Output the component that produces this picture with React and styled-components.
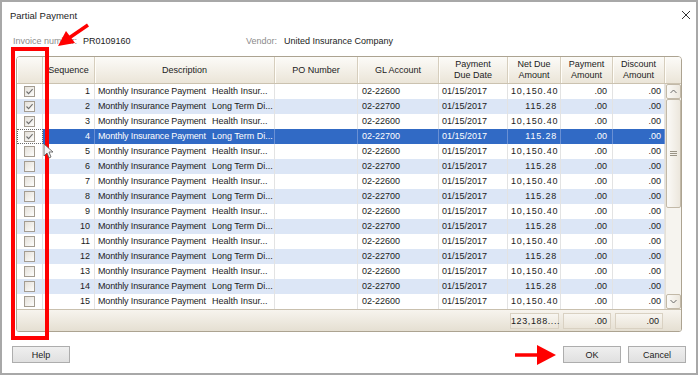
import React from 'react'
import styled, { createGlobalStyle } from 'styled-components'

const FONT = '"Liberation Sans", Arial, sans-serif'
const COLS = '26px 52px 180px 83px 81px 69px 53px 52px 52px'

const GlobalStyle = createGlobalStyle`
  html, body {
    margin: 0;
    padding: 0;
    background: #fff;
  }
  body {
    font-family: ${FONT};
    font-size: 9px;
    color: #1b1b1b;
  }
  * {
    box-sizing: border-box;
  }
`

const Window = styled.div`
  position: relative;
  width: 698px;
  height: 375px;
  border: 2px solid #a8a8a8;
  background: #fff;
  display: flex;
  flex-direction: column;
`

const TitleBar = styled.div`
  height: 26px;
  display: flex;
  align-items: center;
  justify-content: space-between;
  padding: 0 5px 0 8px;
`

const Title = styled.div`
  font-size: 9.5px;
  color: #1e1e1e;
`

const InfoRow = styled.div`
  display: flex;
  align-items: center;
  height: 16px;
  margin-top: 5px;
  padding-left: 11px;
  white-space: nowrap;
`

const Label = styled.span`
  width: ${(p) => p.$w}px;
  color: #8c8c8c;
`

const Value = styled.span`
  width: ${(p) => p.$w}px;
  color: #1b1b1b;
`

const Frame = styled.div`
  margin: 7px 0 0 14px;
  width: 666px;
  height: 276px;
  border: 1px solid #aca391;
  border-radius: 4px 4px 3px 3px;
  overflow: hidden;
  display: flex;
  flex-direction: column;
`

const HeaderRow = styled.div`
  display: grid;
  grid-template-columns: ${COLS} 16px;
  height: 27px;
  background: linear-gradient(#fcfbf8, #ebe5d8);
  border-bottom: 1px solid #cbc2b0;
`

const HeadCell = styled.div`
  display: flex;
  align-items: center;
  justify-content: center;
  text-align: center;
  line-height: 11px;
  color: #222;
  border-right: 1px solid #d6cebd;
  box-shadow: inset 1px 0 0 #fffdf8;
  &:last-child {
    border-right: none;
  }
`

const Body = styled.div`
  display: flex;
  height: 225px;
`

const Rows = styled.div`
  width: 648px;
`

const Row = styled.div`
  display: grid;
  grid-template-columns: ${COLS};
  height: 15px;
  background: ${(p) => (p.$sel ? '#316ac5' : p.$alt ? '#dce6f6' : '#fff')};
  color: ${(p) => (p.$sel ? '#fff' : '#1b1b1b')};
`

const Cell = styled.div`
  line-height: 15px;
  padding: 0 ${(p) => p.$pad ?? 3}px;
  text-align: ${(p) => p.$align || 'left'};
  letter-spacing: ${(p) => p.$ls || 0}px;
  white-space: nowrap;
  overflow: hidden;
  border-right: 1px solid ${(p) => (p.$sel ? '#6a90d4' : '#e3e3e3')};
`

const CheckCell = styled.div`
  display: flex;
  align-items: center;
  justify-content: center;
  border-right: 1px solid #e3e3e3;
  background: ${(p) => (p.$sel ? '#fff' : 'transparent')};
  outline: ${(p) => (p.$sel ? '1px dotted #6b6b6b' : 'none')};
  outline-offset: -1px;
`

const Box = styled.span`
  width: 11px;
  height: 11px;
  border: 1px solid #a39c91;
  background: linear-gradient(135deg, #e4e0d9, #fdfdfc);
  display: flex;
  align-items: center;
  justify-content: center;
`

const DescMain = styled.span`
  display: inline-block;
  width: 114px;
  letter-spacing: -0.15px;
`

const ScrollBar = styled.div`
  width: 16px;
  display: flex;
  flex-direction: column;
  background: #f6f4ef;
  border-left: 1px solid #e6e1d6;
`

const ScrollPart = styled.div`
  height: ${(p) => p.$h}px;
  border: 1px solid #c2b9a8;
  border-radius: 2px;
  background: linear-gradient(90deg, #fbfaf7, #ece7dd);
  display: flex;
  align-items: center;
  justify-content: center;
`

const Track = styled.div`
  flex: 1;
`

const Footer = styled.div`
  display: grid;
  grid-template-columns: ${COLS} 16px;
  align-items: center;
  height: 22px;
  background: linear-gradient(#f7f4ee, #e5dfd2);
  border-top: 1px solid #c9c0ae;
`

const TotalBox = styled.div`
  margin: 0 2px;
  height: 16px;
  line-height: 14px;
  padding-right: 3px;
  text-align: right;
  white-space: nowrap;
  letter-spacing: ${(p) => p.$ls || 0}px;
  border: 1px solid #d9d1c2;
  background: linear-gradient(#f8f6f1, #eae4d8);
`

const ButtonRow = styled.div`
  display: flex;
  gap: 7px;
  margin-top: 14px;
  padding: 0 10px;
`

const Button = styled.button`
  width: 58px;
  height: 17px;
  padding: 0;
  font-family: ${FONT};
  font-size: 9px;
  color: #1b1b1b;
  border: 1px solid #adadad;
  background: linear-gradient(#efefef, #e0e0e0);
  margin-left: ${(p) => (p.$push ? 'auto' : '0')};
`

const Overlay = styled.svg`
  position: absolute;
  left: -2px;
  top: -2px;
  pointer-events: none;
`

const Check = ({ on }) => (
  <Box>
    {on && (
      <svg width='9' height='9' viewBox='0 0 9 9'>
        <path d='M1.5 4.5 L3.6 6.6 L7.6 2.2' fill='none' stroke='#707070' strokeWidth='1.1' />
      </svg>
    )}
  </Box>
)

const rows = Array.from({ length: 15 }, (_, i) => {
  const n = i + 1
  const odd = n % 2 === 1
  return {
    n,
    sub: odd ? 'Health Insur...' : 'Long Term Di...',
    gl: odd ? '02-22600' : '02-22700',
    net: odd ? '10,150.40' : '115.28',
    checked: n <= 4,
  }
})

const Chevron = ({ down }) => (
  <svg width='7' height='5' viewBox='0 0 7 5'>
    <path
      d={down ? 'M0.5 1 L3.5 4 L6.5 1' : 'M0.5 4 L3.5 1 L6.5 4'}
      fill='none'
      stroke='#6a6a6a'
      strokeWidth='1'
    />
  </svg>
)

export default function App() {
  return (
    <>
      <GlobalStyle />
      <Window>
        <TitleBar>
          <Title>Partial Payment</Title>
          <svg width='10' height='10' viewBox='0 0 10 10'>
            <path d='M1 1 L9 9 M9 1 L1 9' stroke='#333' strokeWidth='1' />
          </svg>
        </TitleBar>
        <InfoRow>
          <Label $w={70}>Invoice number:</Label>
          <Value $w={163}>PR0109160</Value>
          <Label $w={38}>Vendor:</Label>
          <Value $w={200}>United Insurance Company</Value>
        </InfoRow>

        <Frame>
          <HeaderRow>
            <HeadCell />
            <HeadCell>Sequence</HeadCell>
            <HeadCell>Description</HeadCell>
            <HeadCell>PO Number</HeadCell>
            <HeadCell>GL Account</HeadCell>
            <HeadCell>
              Payment
              <br />
              Due Date
            </HeadCell>
            <HeadCell>
              Net Due
              <br />
              Amount
            </HeadCell>
            <HeadCell>
              Payment
              <br />
              Amount
            </HeadCell>
            <HeadCell>
              Discount
              <br />
              Amount
            </HeadCell>
            <HeadCell />
          </HeaderRow>

          <Body>
            <Rows>
              {rows.map((r) => {
                const sel = r.n === 4
                return (
                  <Row key={r.n} $alt={r.n % 2 === 0} $sel={sel}>
                    <CheckCell $sel={sel}>
                      <Check on={r.checked} />
                    </CheckCell>
                    <Cell $sel={sel} $align='right' $pad={4}>
                      {r.n}
                    </Cell>
                    <Cell $sel={sel}>
                      <DescMain>Monthly Insurance Payment</DescMain>
                      {r.sub}
                    </Cell>
                    <Cell $sel={sel} />
                    <Cell $sel={sel} $pad={4}>
                      {r.gl}
                    </Cell>
                    <Cell $sel={sel}>01/15/2017</Cell>
                    <Cell $sel={sel} $align='right' $pad={3} $ls={0.8}>
                      {r.net}
                    </Cell>
                    <Cell $sel={sel} $align='right' $pad={5}>
                      .00
                    </Cell>
                    <Cell $sel={sel} $align='right' $pad={3}>
                      .00
                    </Cell>
                  </Row>
                )
              })}
            </Rows>
            <ScrollBar>
              <ScrollPart $h={15}>
                <Chevron />
              </ScrollPart>
              <ScrollPart $h={109}>
                <svg width='7' height='5' viewBox='0 0 7 5'>
                  <path d='M0 0.5 H7 M0 2.5 H7 M0 4.5 H7' stroke='#9a9486' strokeWidth='1' />
                </svg>
              </ScrollPart>
              <Track />
              <ScrollPart $h={15}>
                <Chevron down />
              </ScrollPart>
            </ScrollBar>
          </Body>

          <Footer>
            <div />
            <div />
            <div />
            <div />
            <div />
            <div />
            <TotalBox $ls={0.6}>123,188....</TotalBox>
            <TotalBox>.00</TotalBox>
            <TotalBox>.00</TotalBox>
            <div />
          </Footer>
        </Frame>

        <ButtonRow>
          <Button>Help</Button>
          <Button $push>OK</Button>
          <Button>Cancel</Button>
        </ButtonRow>

        <Overlay width='698' height='375' viewBox='0 0 698 375'>
          <rect x='13' y='49' width='34' height='289' fill='none' stroke='#f00' strokeWidth='4' />
          <line x1='88' y1='25' x2='69' y2='38' stroke='#f00' strokeWidth='3.5' />
          <polygon points='58,46 66,31 75,43' fill='#f00' />
          <line x1='515' y1='355' x2='540' y2='355' stroke='#f00' strokeWidth='3.5' />
          <polygon points='556,355 537,345 537,365' fill='#f00' />
          <path
            d='M44 144 L44 156 L47 153 L49 158 L51 157 L49 152 L53 152 Z'
            fill='#f4f4f4'
            stroke='#555'
            strokeWidth='0.8'
          />
        </Overlay>
      </Window>
    </>
  )
}
